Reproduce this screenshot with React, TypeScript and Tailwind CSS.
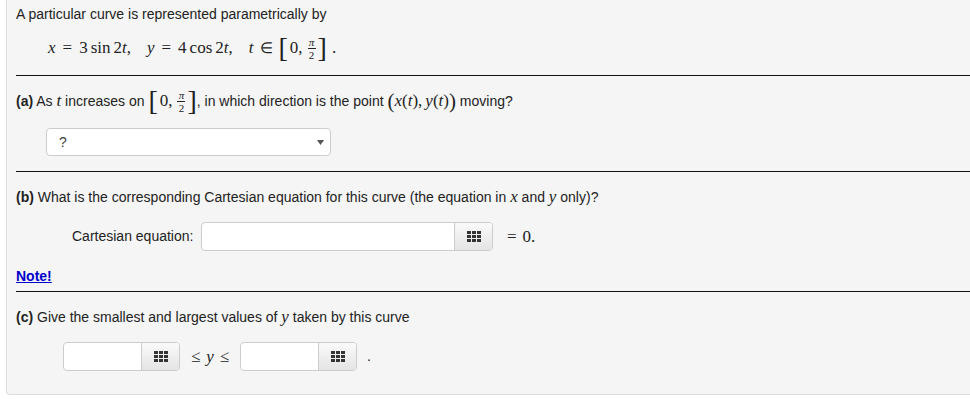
import React from 'react';

function V({ children }: { children: React.ReactNode }) {
  return <span className="italic">{children}</span>;
}

function M({ children, className = '' }: { children: React.ReactNode; className?: string }) {
  return (
    <span className={`inline-flex items-center font-['Liberation_Serif','Times_New_Roman',serif] text-[17px] ${className}`}>
      {children}
    </span>
  );
}

function Interval() {
  return (
    <span className="inline-flex items-center">
      <span className="text-[28px] leading-none font-light">[</span>
      <span className="ml-[2px]">0,</span>
      <span className="ml-[5px] inline-flex flex-col items-center text-[11px] leading-[10px]">
        <span className="italic">π</span>
        <span className="my-[1px] h-px w-[8px] bg-current" />
        <span>2</span>
      </span>
      <span className="ml-[2px] text-[28px] leading-none font-light">]</span>
    </span>
  );
}

function Grid() {
  return (
    <svg width="14" height="11" viewBox="0 0 14 11" fill="#333">
      {[0, 5, 10].map(x =>
        [0, 4, 8].map(y => <rect key={`${x}-${y}`} x={x} y={y} width="4" height="3" />)
      )}
    </svg>
  );
}

function MathInput({ className = '' }: { className?: string }) {
  return (
    <div className={`flex h-[29px] bg-white border border-[#ccc] rounded-[4px] overflow-hidden ${className}`}>
      <div className="flex-1" />
      <div className="w-[38px] border-l border-[#ccc] bg-linear-to-b from-[#fafafa] to-[#e4e4e4] flex items-center justify-center">
        <Grid />
      </div>
    </div>
  );
}

function Rule({ className = '' }: { className?: string }) {
  return <div className={`h-px bg-[#111] ${className}`} />;
}

export default function App() {
  return (
    <div className="w-[970px] h-[408px] overflow-hidden bg-white font-['Liberation_Sans',Arial,sans-serif] text-[14px] text-[#222]">
      <div className="ml-[6px] w-[1000px] bg-[#f5f5f5] border-l border-b border-[#ddd] rounded-bl-[4px] pl-[9px] pb-[23px]">
        <div className="h-[28px] flex items-center">A particular curve is represented parametrically by</div>

        <div className="h-[40px] flex items-center pl-[32px]">
          <M>
            <V>x</V>
            <span className="mx-[7px]">=</span>
            <span>3</span>
            <span className="ml-[3px]">sin</span>
            <span className="ml-[3px]">2<V>t</V>,</span>
            <span className="ml-[16px]"><V>y</V></span>
            <span className="mx-[7px]">=</span>
            <span>4</span>
            <span className="ml-[3px]">cos</span>
            <span className="ml-[3px]">2<V>t</V>,</span>
            <span className="ml-[16px]"><V>t</V></span>
            <span className="mx-[6px] text-[15px]">∈</span>
            <Interval />
            <span className="ml-[5px]">.</span>
          </M>
        </div>

        <Rule className="mt-[7px]" />

        <div className="mt-[12px] h-[26px] flex items-center whitespace-pre">
          <b>(a)</b>
          <span> As </span>
          <M><V>t</V></M>
          <span> increases on </span>
          <M><Interval /></M>
          <span>, in which direction is the point </span>
          <M>
            <span className="text-[21px] leading-none">(</span>
            <V>x</V>(<V>t</V>),
            <span className="ml-[3px]"><V>y</V></span>(<V>t</V>)
            <span className="text-[21px] leading-none">)</span>
          </M>
          <span> moving?</span>
        </div>

        <div className="ml-[30px] mt-[14px] w-[285px] h-[28px] bg-white border border-[#ccc] rounded-[4px] flex items-center justify-between pl-[12px] pr-[6px]">
          <span className="text-[14px] text-[#444]">?</span>
          <svg width="7" height="5" viewBox="0 0 7 5">
            <path d="M0 0 H7 L3.5 5 Z" fill="#555" />
          </svg>
        </div>

        <Rule className="mt-[15px]" />

        <div className="mt-[12px] h-[26px] flex items-center whitespace-pre">
          <b>(b)</b>
          <span> What is the corresponding Cartesian equation for this curve (the equation in </span>
          <M><V>x</V></M>
          <span> and </span>
          <M><V>y</V></M>
          <span> only)?</span>
        </div>

        <div className="mt-[12px] flex items-center">
          <span className="ml-[56px] w-[129px]">Cartesian equation:</span>
          <MathInput className="w-[292px]" />
          <M className="ml-[14px]">
            <span>=</span>
            <span className="ml-[6px]">0.</span>
          </M>
        </div>

        <div className="mt-[15px] h-[20px] flex items-center">
          <span className="font-bold text-[#0000cc] underline">Note!</span>
        </div>

        <Rule className="mt-[5px]" />

        <div className="mt-[12px] h-[26px] flex items-center whitespace-pre">
          <b>(c)</b>
          <span> Give the smallest and largest values of </span>
          <M><V>y</V></M>
          <span> taken by this curve</span>
        </div>

        <div className="mt-[12px] ml-[47px] flex items-center">
          <MathInput className="w-[117px]" />
          <M className="w-[60px] justify-center">
            <span>≤</span>
            <span className="mx-[6px]"><V>y</V></span>
            <span>≤</span>
          </M>
          <MathInput className="w-[117px]" />
          <span className="ml-[10px]">.</span>
        </div>
      </div>
    </div>
  );
}
